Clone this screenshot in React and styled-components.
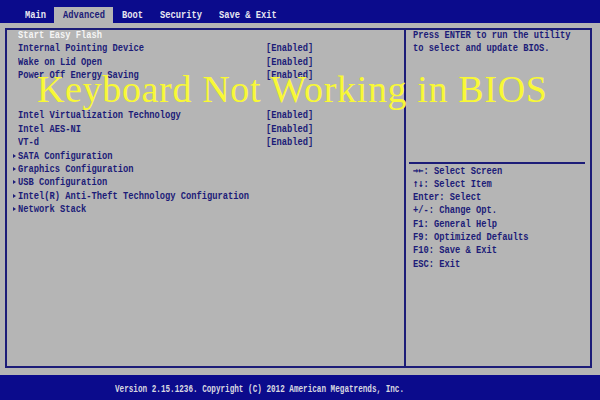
import React from "react";
import styled, { createGlobalStyle } from "styled-components";

const BLUE = "#0b0b8c";
const GRAY = "#b5b5b5";
const NAVY = "#1c1c78";

const Global = createGlobalStyle`
  html, body { margin: 0; padding: 0; background: ${GRAY}; }
  body { width: 600px; height: 400px; overflow: hidden; }
`;

const Screen = styled.div`
  position: relative;
  width: 600px;
  height: 400px;
  display: flex;
  flex-direction: column;
  background: ${GRAY};
  font-family: "Liberation Mono", monospace;
  font-size: 11px;
  font-weight: bold;
  color: ${NAVY};
`;

const Txt = styled.span`
  display: inline-block;
  white-space: pre;
  transform: scaleX(${(p) => p.$sx || 0.795});
  transform-origin: left center;
`;

const Glyph = styled.span`
  font-family: "DejaVu Sans Mono", monospace;
  font-weight: bold;
`;

const TopBar = styled.div`
  height: 23px;
  background: ${BLUE};
  display: flex;
  align-items: flex-end;
  padding-left: 16px;
`;

const Tab = styled.div`
  height: 16px;
  line-height: 16px;
  padding: 0 8px 0 9px;
  background: ${(p) => (p.$active ? GRAY : "transparent")};
  color: ${(p) => (p.$active ? NAVY : "#e6e6f0")};
  width: ${(p) => p.$w}px;
`;

const Body = styled.div`
  flex: 1;
  padding: 5px 8px 7px 5px;
  display: flex;
  min-width: 0;
`;

const Panel = styled.div`
  flex: 1;
  min-width: 0;
  border: 2px solid ${NAVY};
  display: grid;
  grid-template-columns: 397px minmax(0, 1fr);
`;

const LeftCol = styled.div`
  padding-left: 11px;
  margin-top: -1px;
  display: flex;
  flex-direction: column;
`;

const RightCol = styled.div`
  border-left: 2px solid ${NAVY};
  display: flex;
  flex-direction: column;
  min-width: 0;
  margin-top: -1px;
`;

const Row = styled.div`
  position: relative;
  height: 13.4px;
  line-height: 13.4px;
  display: flex;
  white-space: nowrap;
  color: ${(p) => (p.$white ? "#f4f4f4" : NAVY)};
`;

const Label = styled.div`
  width: 248px;
  flex: none;
`;

const Arrow = styled.span`
  position: absolute;
  left: -5px;
  top: 4px;
  width: 0;
  height: 0;
  border-left: 3px solid ${NAVY};
  border-top: 2.5px solid transparent;
  border-bottom: 2.5px solid transparent;
`;

const Help = styled.div`
  height: 133px;
  padding-left: 7px;
`;

const HLine = styled.div`
  height: 2px;
  background: ${NAVY};
  margin: 0 5px 0 3px;
`;

const Keys = styled.div`
  padding-left: 7px;
`;

const Footer = styled.div`
  height: 25px;
  background: ${BLUE};
  color: #d8d8e0;
  display: flex;
  align-items: center;
  padding: 2px 0 0 115px;
  box-sizing: border-box;
`;

const Overlay = styled.div`
  position: absolute;
  left: 37px;
  top: 70px;
  font-family: "Liberation Serif", serif;
  font-weight: normal;
  font-size: 38px;
  line-height: 38px;
  letter-spacing: 0.65px;
  color: #f8f836;
  white-space: nowrap;
  pointer-events: none;
`;

const tabs = [
  ["Main", 21],
  ["Advanced", 42],
  ["Boot", 21],
  ["Security", 42],
  ["Save & Exit", 58],
];

const items = [
  { label: "Start Easy Flash", white: true },
  { label: "Internal Pointing Device", value: "[Enabled]" },
  { label: "Wake on Lid Open", value: "[Enabled]" },
  { label: "Power Off Energy Saving", value: "[Enabled]" },
  { label: "" },
  { label: "" },
  { label: "Intel Virtualization Technology", value: "[Enabled]" },
  { label: "Intel AES-NI", value: "[Enabled]" },
  { label: "VT-d", value: "[Enabled]" },
  { label: "SATA Configuration", sub: true },
  { label: "Graphics Configuration", sub: true },
  { label: "USB Configuration", sub: true },
  { label: "Intel(R) Anti-Theft Technology Configuration", sub: true },
  { label: "Network Stack", sub: true },
];

const keys = [
  ["→←", ": Select Screen"],
  ["↑↓", ": Select Item"],
  ["", "Enter: Select"],
  ["", "+/-: Change Opt."],
  ["", "F1: General Help"],
  ["", "F9: Optimized Defaults"],
  ["", "F10: Save & Exit"],
  ["", "ESC: Exit"],
];

export default function App() {
  return (
    <>
      <Global />
      <Screen>
        <TopBar>
          {tabs.map(([t, w]) => (
            <Tab key={t} $active={t === "Advanced"} $w={w}>
              <Txt>{t}</Txt>
            </Tab>
          ))}
        </TopBar>
        <Body>
          <Panel>
            <LeftCol>
              {items.map((it, i) => (
                <Row key={i} $white={it.white}>
                  {it.sub && <Arrow />}
                  <Label>
                    <Txt>{it.label}</Txt>
                  </Label>
                  {it.value && <Txt>{it.value}</Txt>}
                </Row>
              ))}
            </LeftCol>
            <RightCol>
              <Help>
                <Row>
                  <Txt>Press ENTER to run the utility</Txt>
                </Row>
                <Row>
                  <Txt>to select and update BIOS.</Txt>
                </Row>
              </Help>
              <HLine />
              <Keys>
                {keys.map(([g, k]) => (
                  <Row key={k}>
                    <Txt>
                      {g && <Glyph>{g}</Glyph>}
                      {k}
                    </Txt>
                  </Row>
                ))}
              </Keys>
            </RightCol>
          </Panel>
        </Body>
        <Footer>
          <Txt $sx={0.695}>
            Version 2.15.1236. Copyright (C) 2012 American Megatrends, Inc.
          </Txt>
        </Footer>
        <Overlay>Keyboard Not Working in BIOS</Overlay>
      </Screen>
    </>
  );
}
